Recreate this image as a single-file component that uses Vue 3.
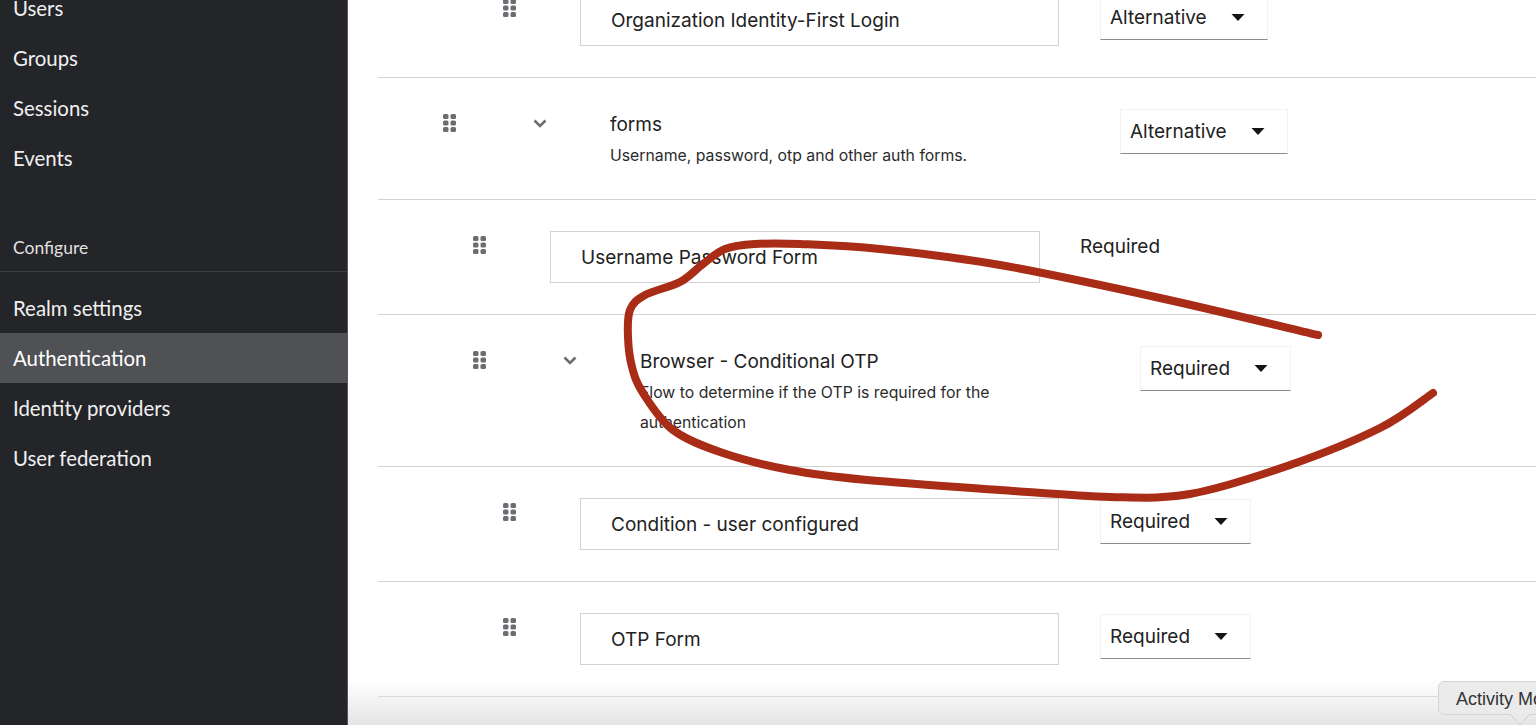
<script setup>
const topNav = ['Users', 'Groups', 'Sessions', 'Events']
const configNav = ['Realm settings', 'Authentication', 'Identity providers', 'User federation']

const rows = [
  { level: 2, name: 'Organization Identity-First Login', req: 'Alternative' },
  { level: 0, flow: true, name: 'forms', desc: 'Username, password, otp and other auth forms.', req: 'Alternative' },
  { level: 1, name: 'Username Password Form', req: 'Required', plain: true },
  { level: 1, flow: true, name: 'Browser - Conditional OTP', desc: 'Flow to determine if the OTP is required for the authentication', req: 'Required' },
  { level: 2, name: 'Condition - user configured', req: 'Required' },
  { level: 2, name: 'OTP Form', req: 'Required' }
]

const dots = [
  [0, 0], [7.5, 0],
  [0, 6.5], [7.5, 6.5],
  [0, 13], [7.5, 13]
]

// the hand drawn red line, sampled from the screenshot
const stroke = [
  [1318, 335], [1160, 298], [1000, 265], [880, 249], [800, 244], [755, 244], [725, 249], [703, 264],
  [680, 282], [645, 295], [630, 310], [628, 337], [632, 367], [643, 393], [673, 430],
  [723, 453], [790, 470], [867, 480], [1000, 490], [1110, 497], [1190, 494], [1290, 465],
  [1380, 428], [1433, 393]
]

function smoothPath(pts) {
  let d = `M${pts[0][0]} ${pts[0][1]}`
  for (let i = 0; i < pts.length - 1; i++) {
    const p0 = pts[i - 1] || pts[i]
    const p1 = pts[i]
    const p2 = pts[i + 1]
    const p3 = pts[i + 2] || p2
    const c1x = p1[0] + (p2[0] - p0[0]) / 6
    const c1y = p1[1] + (p2[1] - p0[1]) / 6
    const c2x = p2[0] - (p3[0] - p1[0]) / 6
    const c2y = p2[1] - (p3[1] - p1[1]) / 6
    d += `C${c1x} ${c1y} ${c2x} ${c2y} ${p2[0]} ${p2[1]}`
  }
  return d
}
const strokePath = smoothPath(stroke)
</script>

<template>
  <div class="page">
    <nav class="sidebar">
      <a v-for="item in topNav" :key="item" class="nav-item">{{ item }}</a>
      <div class="nav-heading">Configure</div>
      <a
        v-for="item in configNav"
        :key="item"
        class="nav-item"
        :class="{ active: item === 'Authentication' }"
      >{{ item }}</a>
    </nav>

    <main class="content">
      <div
        v-for="row in rows"
        :key="row.name"
        class="row"
        :class="['level-' + row.level, { flow: row.flow }]"
      >
        <svg class="drag" width="13" height="18" viewBox="0 0 13 18">
          <rect
            v-for="d in dots"
            :key="d.join()"
            :x="d[0]"
            :y="d[1]"
            width="5.5"
            height="5"
            rx="1.5"
            fill="#6a6e73"
          />
        </svg>

        <template v-if="row.flow">
          <svg class="chevron" width="14" height="9" viewBox="0 0 14 9">
            <path d="M1.5 1.5 7 7l5.5-5.5" fill="none" stroke="#6a6e73" stroke-width="2.6" />
          </svg>
          <div class="flow-text">
            <div class="flow-name">{{ row.name }}</div>
            <div class="flow-desc">{{ row.desc }}</div>
          </div>
        </template>
        <div v-else class="step-box">{{ row.name }}</div>

        <div v-if="row.plain" class="req-text">{{ row.req }}</div>
        <div v-else class="req-select" :class="{ wide: row.req === 'Alternative' }">
          <span>{{ row.req }}</span>
          <svg width="14" height="7" viewBox="0 0 14 7"><path d="M0.5 0h13L7 7z" fill="#151515" /></svg>
        </div>
      </div>

      <div class="fade"></div>
    </main>

    <svg class="scribble" width="1536" height="725" viewBox="0 0 1536 725">
      <path
        :d="strokePath"
        fill="none"
        stroke="#a92c17"
        stroke-width="8"
        stroke-linecap="round"
        stroke-linejoin="round"
      />
    </svg>

    <div class="dock-tip">
      Activity Monitor
      <span class="dock-arrow"></span>
    </div>
  </div>
</template>

<style>
html,
body {
  margin: 0;
  overflow: hidden;
  background: #fff;
}
</style>

<style scoped>
.page {
  position: relative;
  display: flex;
  width: 1536px;
  height: 725px;
  overflow: hidden;
  font-family: "Lato", "Liberation Sans", sans-serif;
  color: #151515;
  background: #fff;
}

.sidebar {
  flex: 0 0 348px;
  box-sizing: border-box;
  height: 742px;
  margin-top: -17px;
  background: #242529;
  border-right: 1px solid #55575a;
  display: flex;
  flex-direction: column;
}
.nav-item {
  height: 50px;
  line-height: 50px;
  padding-left: 13px;
  font-size: 20.4px;
  color: #f0f0f0;
}
.nav-item.active {
  background: #4f5154;
  color: #fff;
}
.nav-heading {
  margin-top: 49px;
  margin-bottom: 11px;
  padding: 0 0 8px 13px;
  line-height: 31px;
  font-size: 17.5px;
  color: #e0e0e0;
  border-bottom: 1px solid #3c3f42;
}

.content {
  flex: 1;
  position: relative;
  padding-left: 30px;
  margin-top: -37px;
}
.row {
  display: flex;
  align-items: flex-start;
  box-sizing: border-box;
  min-height: 115px;
  padding-top: 31px;
  border-bottom: 1px solid #d2d2d2;
  font-family: "Inter", "Liberation Sans", sans-serif;
  color: #222;
}
.row.flow {
  padding-bottom: 28px;
}
.level-0 {
  padding-left: 63px;
}
.level-1 {
  padding-left: 93px;
}
.level-2 {
  padding-left: 123px;
}

.drag {
  flex: none;
  margin-top: 5px;
  margin-left: 2px;
  margin-right: 64px;
}
.chevron {
  flex: none;
  margin-top: 10px;
  margin-left: 13px;
  margin-right: 63px;
}

.step-box {
  flex: none;
  box-sizing: border-box;
  height: 52px;
  line-height: 52px;
  padding-left: 30px;
  border: 1px solid #d2d2d2;
  font-size: 19px;
}
.level-1 .step-box {
  width: 490px;
  margin-right: 40px;
}
.level-2 .step-box {
  width: 479px;
  margin-right: 41px;
}
.req-text {
  font-size: 19px;
  line-height: 32px;
}

.flow-text {
  flex: none;
  box-sizing: border-box;
  width: 510px;
  padding-right: 100px;
}
.level-1 .flow-text {
  width: 500px;
}
.flow-name {
  font-size: 19px;
  line-height: 31px;
}
.flow-desc {
  margin-top: 1px;
  font-size: 15.8px;
  line-height: 30px;
  color: #2b2b2b;
}

.req-select {
  flex: none;
  box-sizing: border-box;
  width: 151px;
  height: 45px;
  margin-top: 1px;
  padding: 0 22px 0 9px;
  display: flex;
  align-items: center;
  justify-content: space-between;
  font-size: 19px;
  border: 1px solid #f2f2f2;
  border-bottom: 1.5px solid #8a8d90;
}
.req-select.wide {
  width: 168px;
}
.flow .req-select {
  margin-top: 0;
}

.fade {
  position: absolute;
  left: 0;
  right: 0;
  top: 717px;
  height: 45px;
  background: linear-gradient(to bottom, rgba(228, 228, 228, 0), #e4e4e4);
}

.scribble {
  position: absolute;
  left: 0;
  top: 0;
  pointer-events: none;
}

.dock-tip {
  position: absolute;
  left: 1438px;
  top: 681px;
  width: 120px;
  height: 34px;
  box-sizing: border-box;
  padding-left: 17px;
  line-height: 34px;
  white-space: nowrap;
  font-family: "Liberation Sans", sans-serif;
  font-size: 18px;
  color: #333;
  background: #ebebeb;
  border: 1px solid #d4d4d4;
  border-radius: 6px;
}
.dock-arrow {
  position: absolute;
  left: 74px;
  top: 26px;
  width: 13px;
  height: 13px;
  transform: rotate(45deg);
  background: #ebebeb;
  border-right: 1px solid #d4d4d4;
  border-bottom: 1px solid #d4d4d4;
}
</style>
